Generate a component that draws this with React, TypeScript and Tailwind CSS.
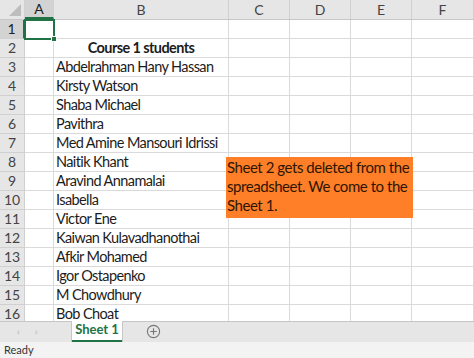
import React from 'react'

const cols = ['A', 'B', 'C', 'D', 'E', 'F']
const widths = ['w-[29px]', 'w-[175px]', 'w-[61px]', 'w-[61px]', 'w-[61px]', 'w-[62px]']

const names: Record<number, string> = {
  3: 'Abdelrahman Hany Hassan',
  4: 'Kirsty Watson',
  5: 'Shaba Michael',
  6: 'Pavithra',
  7: 'Med Amine Mansouri Idrissi',
  8: 'Naitik Khant',
  9: 'Aravind Annamalai',
  10: 'Isabella',
  11: 'Victor Ene',
  12: 'Kaiwan Kulavadhanothai',
  13: 'Afkir Mohamed',
  14: 'Igor Ostapenko',
  15: 'M Chowdhury',
  16: 'Bob Choat',
}

const rows = Array.from({ length: 16 }, (_, i) => i + 1)

export default function App() {
  return (
    <div className="w-[474px] h-[358px] bg-white overflow-hidden flex flex-col text-[14.5px] text-[#1c1c1c] tracking-[-0.6px]" style={{ fontFamily: 'Lato, "Noto Sans", sans-serif' }}>
      <div className="relative h-[321px] overflow-hidden">
        {/* column header */}
        <div className="flex h-[20px] bg-[#e6e6e6] border-b border-[#c6c6c6] text-[#444] text-[14px] tracking-normal">
          <div className="w-[25px] shrink-0 border-r border-[#d0d0d0] relative">
            <div className="absolute right-[3px] bottom-[3px] w-0 h-0 border-l-[12px] border-l-transparent border-b-[12px] border-b-[#bdbdbd]" />
          </div>
          {cols.map((c, i) => (
            <div
              key={c}
              className={`${widths[i]} shrink-0 border-r border-[#d0d0d0] flex items-center justify-center leading-none ${c === 'A' ? 'bg-[#d3d3d3] border-b-2 border-b-[#217346] text-[#222]' : ''}`}
            >
              {c}
            </div>
          ))}
        </div>
        {rows.map((r) => (
          <div key={r} className="flex h-[19px]">
            <div className={`w-[25px] shrink-0 border-r border-b border-[#d0d0d0] flex items-center justify-center text-[14px] tracking-normal leading-none ${r === 1 ? 'bg-[#d3d3d3] text-[#222] border-r-2 border-r-[#217346]' : 'bg-[#e6e6e6] text-[#444]'}`}>
              {r}
            </div>
            {cols.map((c, i) => (
              <div key={c} className={`${widths[i]} shrink-0 border-r border-b border-[#dadada] flex items-center leading-none whitespace-nowrap overflow-visible`}>
                {c === 'B' && r === 2 && <span className="w-full text-center font-bold">Course 1 students</span>}
                {c === 'B' && names[r] && <span className="pl-[2px]">{names[r]}</span>}
              </div>
            ))}
          </div>
        ))}
        {/* selected A1 */}
        <div className="absolute left-[24px] top-[19px] w-[31px] h-[21px] border-2 border-[#217346] pointer-events-none">
          <div className="absolute -right-[4px] -bottom-[4px] w-[6px] h-[6px] bg-[#217346] border border-white" />
        </div>
        {/* text box */}
        <div className="absolute left-[226px] top-[157px] w-[187px] h-[61px] bg-[#fe7f27] text-[#2e1604] text-[15px] tracking-[-0.45px] leading-[19px] pl-[1px] pt-[1px] whitespace-nowrap overflow-hidden">
          Sheet 2 gets deleted from the
          <br />
          spreadsheet. We come to the
          <br />
          Sheet 1.
        </div>
      </div>
      {/* tab bar */}
      <div className="h-[21px] bg-[#e6e6e6] border-t border-[#c6c6c6] flex items-stretch tracking-normal">
        <div className="w-[72px] flex items-center pl-[17px] gap-[15px] text-[#b0b0b0] text-[10px]">
          <span>‹</span>
          <span>›</span>
        </div>
        <div className="w-[50px] bg-white border-b-2 border-[#217346] flex items-center justify-center text-[#217346] font-bold text-[13px] whitespace-nowrap -mt-px shadow-[1px_0_0_#c6c6c6,-1px_0_0_#c6c6c6]">
          Sheet 1
        </div>
        <div className="ml-[24px] flex items-center">
          <svg width="15" height="15" viewBox="0 0 16 16" fill="none" stroke="#777" strokeWidth="1.2">
            <circle cx="8" cy="8" r="6.5" />
            <path d="M8 4.5v7M4.5 8h7" />
          </svg>
        </div>
      </div>
      {/* status bar */}
      <div className="flex-1 bg-[#f3f3f3] flex items-center pl-[4px] text-[11px] text-[#333] tracking-normal">Ready</div>
    </div>
  )
}
